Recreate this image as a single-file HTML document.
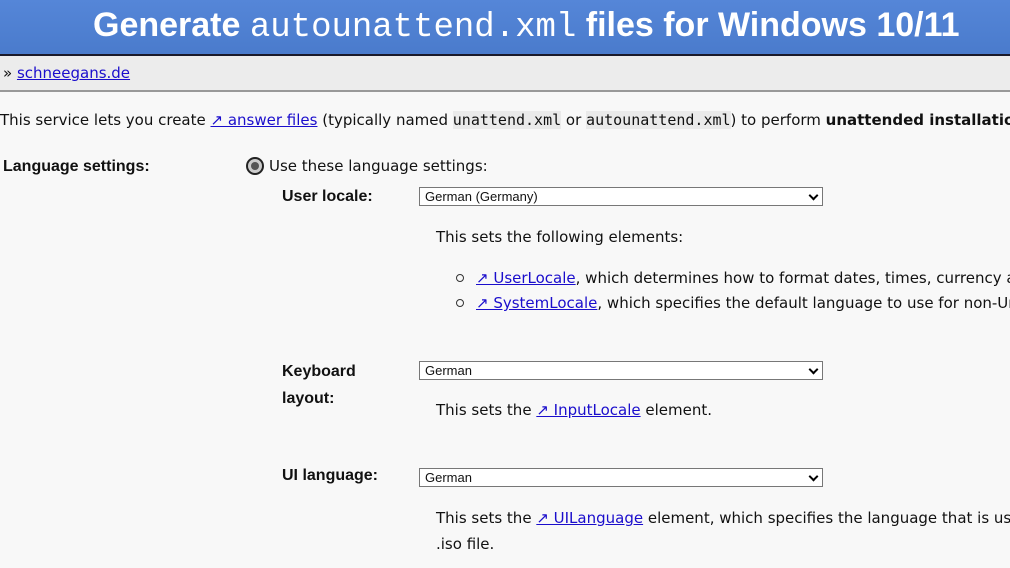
<!DOCTYPE html>
<html><head><style>
html,body{margin:0;padding:0;width:1010px;height:568px;overflow:hidden;background:#f8f8f8;font-family:"DejaVu Sans","Liberation Sans",sans-serif;font-size:15px;color:#111}
.hdr{position:absolute;left:0;top:0;width:1010px;height:54px;background:linear-gradient(#5586d8,#4a7bcc);border-bottom:2px solid #1a1a2a;color:#fff;font-weight:bold;font-size:34px;font-family:"Liberation Sans",sans-serif;white-space:nowrap}
.hdr span.t{position:absolute;left:93px;top:6px}
.mono{font-family:"Liberation Mono",monospace;font-weight:normal}
.nav{position:absolute;left:0;top:56px;width:1010px;height:34px;background:#ececec;border-bottom:2px solid #999}
a{color:#1a0dcc;text-decoration:underline}
.abs{position:absolute;white-space:nowrap}
code{font-family:"DejaVu Sans Mono","Liberation Mono",monospace;background:#eaeaea;font-size:15px}
b{font-weight:bold;font-family:"Liberation Sans",sans-serif;font-size:16px}
.sel{position:absolute;left:419px;width:397px;height:17px;border:1px solid #777;background:#fff;font-family:"Liberation Sans",sans-serif;font-size:13px;line-height:17px;padding-left:5px;box-sizing:content-box}
.sel:after{content:"";position:absolute;right:5px;top:4px;width:5px;height:5px;border-right:2px solid #000;border-bottom:2px solid #000;transform:rotate(45deg)}
.radio{position:absolute;left:246px;top:157px;width:14px;height:14px;border:2px solid #222;border-radius:50%;background:#ccc}
.radio:after{content:"";position:absolute;left:3px;top:3px;width:8px;height:8px;border-radius:50%;background:#555}
.bul{position:absolute;width:6px;height:6px;border:1.5px solid #333;border-radius:50%}
</style></head><body>
<div class="hdr"><span class="t">Generate <span class="mono">autounattend.xml</span> files for Windows 10/11</span></div>
<div class="nav"><span class="abs" style="left:3px;top:8px">» <a>schneegans.de</a></span></div>
<div class="abs" style="left:0;top:111px">This service lets you create <a>↗ answer files</a> (typically named <code>unattend.xml</code> or <code>autounattend.xml</code>) to perform <b style="font-family:'DejaVu Sans';font-size:15px">unattended installations</b></div>
<div class="abs" style="left:3px;top:157px"><b>Language settings:</b></div>
<div class="radio"></div>
<div class="abs" style="left:269px;top:157px">Use these language settings:</div>
<div class="abs" style="left:282px;top:187px"><b>User locale:</b></div>
<div class="sel" style="top:187px">German (Germany)</div>
<div class="abs" style="left:436px;top:228px">This sets the following elements:</div>
<div class="bul" style="left:456px;top:274px"></div>
<div class="abs" style="left:476px;top:269px"><a>↗ UserLocale</a>, which determines how to format dates, times, currency and numbers</div>
<div class="bul" style="left:456px;top:299px"></div>
<div class="abs" style="left:476px;top:294px"><a>↗ SystemLocale</a>, which specifies the default language to use for non-Unicode programs</div>
<div class="abs" style="left:282px;top:358px;line-height:26px"><b>Keyboard<br>layout:</b></div>
<div class="sel" style="top:361px">German</div>
<div class="abs" style="left:436px;top:401px">This sets the <a>↗ InputLocale</a> element.</div>
<div class="abs" style="left:282px;top:466px"><b>UI language:</b></div>
<div class="sel" style="top:468px">German</div>
<div class="abs" style="left:436px;top:505px;line-height:26px">This sets the <a>↗ UILanguage</a> element, which specifies the language that is used<br>.iso file.</div>
</body></html>
